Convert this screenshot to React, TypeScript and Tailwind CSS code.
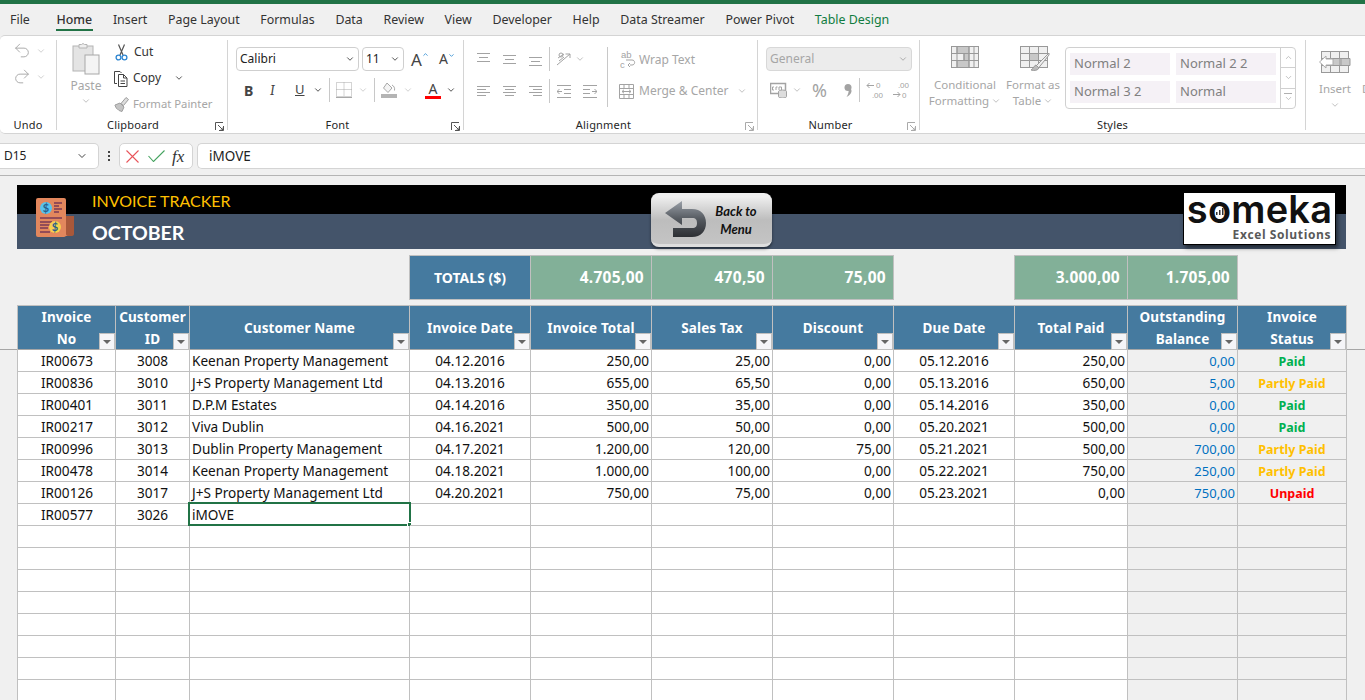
import { ChevronDown, ChevronUp, Redo2, Undo2 } from 'lucide-react';

const TABS = ['File', 'Home', 'Insert', 'Page Layout', 'Formulas', 'Data', 'Review', 'View', 'Developer', 'Help', 'Data Streamer', 'Power Pivot', 'Table Design'];

const COLS = 'grid grid-cols-[99px_74px_220px_121px_121px_121px_121px_121px_113px_110px_109px]';

const HEADERS = ['Invoice\nNo', 'Customer\nID', 'Customer Name', 'Invoice Date', 'Invoice Total', 'Sales Tax', 'Discount', 'Due Date', 'Total Paid', 'Outstanding\nBalance', 'Invoice\nStatus'];

const ROWS = [
  ['IR00673', '3008', 'Keenan Property Management', '04.12.2016', '250,00', '25,00', '0,00', '05.12.2016', '250,00', '0,00', 'Paid'],
  ['IR00836', '3010', 'J+S Property Management Ltd', '04.13.2016', '655,00', '65,50', '0,00', '05.13.2016', '650,00', '5,00', 'Partly Paid'],
  ['IR00401', '3011', 'D.P.M Estates', '04.14.2016', '350,00', '35,00', '0,00', '05.14.2016', '350,00', '0,00', 'Paid'],
  ['IR00217', '3012', 'Viva Dublin', '04.16.2021', '500,00', '50,00', '0,00', '05.20.2021', '500,00', '0,00', 'Paid'],
  ['IR00996', '3013', 'Dublin Property Management', '04.17.2021', '1.200,00', '120,00', '75,00', '05.21.2021', '500,00', '700,00', 'Partly Paid'],
  ['IR00478', '3014', 'Keenan Property Management', '04.18.2021', '1.000,00', '100,00', '0,00', '05.22.2021', '750,00', '250,00', 'Partly Paid'],
  ['IR00126', '3017', 'J+S Property Management Ltd', '04.20.2021', '750,00', '75,00', '0,00', '05.23.2021', '0,00', '750,00', 'Unpaid'],
  ['IR00577', '3026', 'iMOVE', '', '', '', '', '', '', '', ''],
  ...Array.from({ length: 8 }, () => ['', '', '', '', '', '', '', '', '', '', '']),
];

const STATUS: Record<string, string> = {
  Paid: 'text-[#00b050]',
  'Partly Paid': 'text-[#ffc000]',
  Unpaid: 'text-[#ff0000]',
};

function Chev({ className = '' }: { className?: string }) {
  return <ChevronDown className={`w-[10px] h-[10px] shrink-0 ${className}`} strokeWidth={2} />;
}

function Launcher({ dark = false }: { dark?: boolean }) {
  return (
    <svg width="9" height="9" viewBox="0 0 9 9" fill="none" stroke={dark ? '#555' : '#aaa'} strokeWidth="1">
      <path d="M.5 8V.5H8M8.5 4v4.5H4M3 3l5 5M8 5.500V8H5.500" />
    </svg>
  );
}

function Lines({ rows }: { rows: [number, number, number][] }) {
  return (
    <svg width="15" height="15" viewBox="0 0 15 15" stroke="#a3a3a3" strokeWidth="1" className="shrink-0">
      {rows.map(([a, b, y]) => (
        <line key={y} x1={a} x2={b} y1={y + 0.5} y2={y + 0.5} />
      ))}
    </svg>
  );
}

function Sep({ className = 'h-[24px]' }: { className?: string }) {
  return <div className={`w-px bg-[#c8c8c8] shrink-0 ${className}`} />;
}

function Group({ label, width, labelPad = '', launcher, dark, children }: { label: string; width: string; labelPad?: string; launcher?: boolean; dark?: boolean; children: React.ReactNode }) {
  return (
    <div className={`relative flex flex-col shrink-0 border-r border-[#d4d4d4] my-[4px] h-[90px] ${width}`}>
      <div className="flex-1 min-h-0">{children}</div>
      <div className={`h-[17px] translate-y-[3px] text-center text-[11px] leading-[17px] text-[#262626] tracking-[0.2px] ${labelPad}`}>{label}</div>
      {launcher && (
        <div className="absolute right-[3px] -bottom-[1px]">
          <Launcher dark={dark} />
        </div>
      )}
    </div>
  );
}

function ScissorsIcon() {
  return (
    <svg width="13" height="17" viewBox="0 0 13 17" fill="none">
      <path d="M3.500 .5L8 11M9.500 .5L5 11" stroke="#555" strokeWidth="1.200" />
      <circle cx="3.500" cy="13.500" r="2.400" stroke="#2e86d1" strokeWidth="1.300" />
      <circle cx="9.500" cy="13.500" r="2.400" stroke="#2e86d1" strokeWidth="1.300" />
    </svg>
  );
}

function CopyIcon() {
  return (
    <svg width="16" height="17" viewBox="0 0 16 17" fill="none" stroke="#444" strokeWidth="1">
      <path d="M4 13.500H1.500V1.500H7L8.500 3" />
      <path d="M5.500 4.500h5l3.500 3.500v8.500H5.500z" />
      <path d="M10.500 4.500V8H14M7.500 11h4.500M7.500 13.500h4.500" />
    </svg>
  );
}

function PasteIcon() {
  return (
    <svg width="28" height="32" viewBox="0 0 28 32">
      <rect x="1" y="3" width="20" height="25" fill="#e4e4e4" stroke="#b4b4b4" />
      <path d="M7 3V1.500h2.500L11 .5l1.500 1h2.500V5H7z" fill="#efefef" stroke="#b4b4b4" />
      <rect x="13" y="12" width="14" height="19" fill="#f4f4f4" stroke="#a8a8a8" />
    </svg>
  );
}

function BrushIcon() {
  return (
    <svg width="16" height="16" viewBox="0 0 16 16">
      <path d="M1 9l5-2 4 4-2 4.500-3-1-1.500-1.500-1-.5-1.500-3z" fill="#c4c4c4" stroke="#9e9e9e" />
      <path d="M7 7.500l5-6 2.500 2-5 6z" fill="#ddd" stroke="#9e9e9e" />
    </svg>
  );
}

function BorderIcon() {
  return (
    <svg width="16" height="16" viewBox="0 0 16 16" fill="none" stroke="#a8a8a8" strokeDasharray="1 1">
      <path d="M.5.5h15v14H.5zM8 .5v14M.5 7.500h15" />
      <path d="M0 15.500h16" strokeDasharray="none" />
    </svg>
  );
}

function FillIcon() {
  return (
    <svg width="16" height="16" viewBox="0 0 16 16">
      <path d="M6 1l5 5-4 4.500-4.500-4.500z" fill="#f4f4f4" stroke="#a8a8a8" />
      <path d="M11 3c2 1 3 3 2.500 5.500" fill="none" stroke="#a8a8a8" />
      <rect x="0" y="12" width="16" height="4" fill="#b4b4b4" />
    </svg>
  );
}

function OrientIcon() {
  return (
    <svg width="16" height="15" viewBox="0 0 16 15" fill="none" stroke="#a3a3a3">
      <path d="M1 13L14 2M9.500 2H14v4" />
      <circle cx="5" cy="3" r="2" />
      <path d="M2 6l6-4M3 9l5-4" />
    </svg>
  );
}

function IndentIcon({ flip = false }: { flip?: boolean }) {
  return (
    <svg width="14" height="13" viewBox="0 0 14 13" fill="none" stroke="#a3a3a3" className={flip ? '-scale-x-100' : ''}>
      <path d="M0 .5h14M0 12.500h14M7 4.500h7M7 8.500h7M5 6.500H0M2.500 4L0 6.500 2.500 9" />
    </svg>
  );
}

function MergeIcon() {
  return (
    <svg width="15" height="15" viewBox="0 0 15 15" fill="none" stroke="#a3a3a3">
      <path d="M.5.500h14v14H.5zM.5 4.500h14M.5 10.500h14M5 .500v4M10 .500v4M5 10.500v4M10 10.500v4" />
      <path d="M3 7.500h9M5 5.800L3 7.500l2 1.700M10 5.800l2 1.700-2 1.700" />
    </svg>
  );
}

function WrapIcon() {
  return (
    <svg width="16" height="20" viewBox="0 0 16 20" fill="none" stroke="#a3a3a3" fontFamily="Liberation Sans" className="overflow-visible">
      <text x="1" y="8.500" fontSize="9.500" fill="#a3a3a3" stroke="none">ab</text>
      <text x="0" y="19" fontSize="9.500" fill="#a3a3a3" stroke="none">c</text>
      <path d="M10 16h2c3.500 0 3.500-5 0-5H6M10 14l-2 2 2 2" />
    </svg>
  );
}

function AccountingIcon() {
  return (
    <svg width="17" height="16" viewBox="0 0 17 16" fill="none" stroke="#a3a3a3">
      <rect x=".5" y="1.500" width="15" height="10" strokeWidth="1.500" />
      <path d="M4 5H2.500v3H4M6 8V5h1.500M9 8V5h2.500v3" strokeWidth="1" />
      <ellipse cx="12.500" cy="9.500" rx="4" ry="1.500" fill="#ddd" />
      <path d="M8.500 9.500v5c0 2 8 2 8 0v-5" fill="#ddd" />
    </svg>
  );
}

function DecimalIcon({ more = false }: { more?: boolean }) {
  return (
    <svg width="17" height="20" viewBox="0 0 17 20" fill="none" stroke="#a3a3a3" fontFamily="Liberation Sans" className="overflow-visible">
      {more ? (
        <>
          <text x="17" y="8" textAnchor="end" fontSize="8" fill="#a3a3a3" stroke="none">.00</text>
          <path d="M1 14.500h7M5.500 12L8 14.500 5.500 17" />
          <text x="10" y="18" fontSize="8" fill="#a3a3a3" stroke="none">0</text>
        </>
      ) : (
        <>
          <path d="M1 5.500h7M3.500 3L1 5.500 3.500 8" />
          <text x="10" y="8" fontSize="8" fill="#a3a3a3" stroke="none">0</text>
          <text x="17" y="18" textAnchor="end" fontSize="8" fill="#a3a3a3" stroke="none">.00</text>
        </>
      )}
    </svg>
  );
}

function CommaIcon() {
  return (
    <svg width="8" height="13" viewBox="0 0 8 13" fill="#a3a3a3">
      <circle cx="4" cy="3.500" r="3.500" />
      <path d="M5 5c2.500-.5 2.500 1 2.500 2C7.500 9.500 5 12 2.500 13 4 10.500 5 8 4.500 6z" />
    </svg>
  );
}

function CondIcon() {
  return (
    <svg width="28" height="22" viewBox="0 0 28 22" stroke="#999" fill="#f0f0f0">
      <rect x=".5" y=".5" width="27" height="21" />
      <path d="M6 .500h12v7H6zM13 7.500h5v7h-5zM6 14.500h12v7H6z" fill="#c8c8c8" />
      <path d="M.5 7.500h27M.5 14.500h27M6 .500v21M13 7.500v7M18 .500v21M23 .500v21" fill="none" />
    </svg>
  );
}

function TableIcon() {
  return (
    <svg width="30" height="27" viewBox="0 0 30 27" stroke="#999" fill="#f0f0f0">
      <rect x=".5" y=".5" width="27" height="21" />
      <path d="M.5 7.500h27M.5 14.500h27M9.500 .500v21M18.500 .500v21" fill="none" />
      <path d="M9.500 7.500h9v7h-9z" fill="#c8c8c8" />
      <path d="M29 7L16 20l2.500 2L29 9z" fill="#eee" />
      <path d="M16 19c-2 .5-2 3-5 5 3 1 7 .5 8-2z" fill="#bbb" />
    </svg>
  );
}

function InsertIcon() {
  return (
    <svg width="32" height="22" viewBox="0 0 32 22" stroke="#999" fill="#f0f0f0">
      <rect x="2.500" y=".5" width="27" height="21" />
      <path d="M2.500 7.500h27M2.500 14.500h27M11.500 .500v21M20.500 .500v21" fill="none" />
      <path d="M13 7.500h8v7h-8zM22 7.500h9v7h-9z" fill="#c8c8c8" />
      <path d="M.5 11L7 5v3h7v6H7v3z" fill="#fff" stroke="#aaa" />
    </svg>
  );
}

function RibbonBig({ lines, children, className = '' }: { lines: React.ReactNode[]; children: React.ReactNode; className?: string }) {
  return (
    <div className={`flex flex-col items-center text-[#a6a6a6] text-[11.5px] leading-[16px] ${className}`}>
      <div className="h-[30px]">{children}</div>
      {lines.map((l, i) => (
        <div key={i} className="flex items-center gap-[2px] whitespace-nowrap">
          {l}
        </div>
      ))}
    </div>
  );
}

function Ribbon() {
  return (
    <div className="h-[99px] bg-white rounded-l-[5px] border-y border-[#d4d4d4] flex shrink-0 overflow-hidden">
      <Group label="Undo" width="w-[57px]">
        <div className="flex flex-col gap-[7px] pl-[12px] pt-[1px] text-[#a8a8a8]">
          <div className="flex items-center gap-[4px]">
            <Undo2 className="w-[20px] h-[19px]" strokeWidth={1.2} />
            <Chev className="text-[#c8c8c8]" />
          </div>
          <div className="flex items-center gap-[4px]">
            <Redo2 className="w-[20px] h-[19px]" strokeWidth={1.2} />
            <Chev className="text-[#c8c8c8]" />
          </div>
        </div>
      </Group>

      <Group label="Clipboard" width="w-[171px]" labelPad="pr-[18px]" launcher dark>
        <div className="flex pl-[14px] pt-[3px]">
          <div className="flex flex-col items-center w-[30px] text-[#a6a6a6] text-[12px]">
            <PasteIcon />
            <div className="mt-[3px] leading-[16px]">Paste</div>
            <Chev className="text-[#b4b4b4] mt-[2px]" />
          </div>
          <div className="ml-[14px] text-[12px] text-[#333] flex flex-col gap-[8px]">
            <div className="flex items-center h-[18px] gap-[6px]">
              <ScissorsIcon />
              <span>Cut</span>
            </div>
            <div className="flex items-center h-[18px] gap-[4px] -ml-[2px]">
              <CopyIcon />
              <span>Copy</span>
              <Chev className="ml-[9px] text-[#333]" />
            </div>
            <div className="flex items-center h-[18px] gap-[3px] -ml-[1px] text-[#a6a6a6]">
              <BrushIcon />
              <span className="text-[11.3px]">Format Painter</span>
            </div>
          </div>
        </div>
      </Group>

      <Group label="Font" width="w-[236px]" labelPad="pr-[16px]" launcher dark>
        <div className="pl-[8px] pt-[7px]">
          <div className="flex items-center">
            <div className="w-[123px] h-[24px] border border-[#cfcfcf] rounded-[4px] flex items-center justify-between px-[3px] text-[12px] text-[#222]">
              Calibri
              <Chev className="text-[#333]" />
            </div>
            <div className="w-[42px] h-[24px] ml-[3px] border border-[#cfcfcf] rounded-[4px] flex items-center justify-between px-[3px] text-[12px] text-[#222]">
              11
              <Chev className="text-[#333]" />
            </div>
            <div className="ml-[7px] text-[17px] leading-none text-[#444] flex items-start">
              A<ChevronUp className="w-[7px] h-[7px] text-[#3b93d6]" strokeWidth={3} />
            </div>
            <div className="ml-[10px] text-[14px] leading-none text-[#444] flex items-start">
              A<ChevronDown className="w-[7px] h-[7px] text-[#3b93d6]" strokeWidth={3} />
            </div>
          </div>
          <div className="flex items-center h-[24px] mt-[7px] text-[#444]">
            <span className="ml-[8px] w-[26px] text-[14px] font-bold">B</span>
            <span className="w-[25px] text-[14px] italic font-serif">I</span>
            <span className="w-[18px] text-[13px] underline">U</span>
            <Chev className="text-[#333]" />
            <Sep className="h-[24px] ml-[6px]" />
            <span className="ml-[6px]"><BorderIcon /></span>
            <Chev className="ml-[6px] text-[#c8c8c8]" />
            <Sep className="h-[24px] ml-[6px]" />
            <span className="ml-[6px]"><FillIcon /></span>
            <Chev className="ml-[6px] text-[#c8c8c8]" />
            <span className="ml-[12px] w-[16px] text-center text-[14px] leading-[15px] border-b-[3px] border-[#ff0000]">A</span>
            <Chev className="ml-[5px] text-[#333]" />
          </div>
        </div>
      </Group>

      <Group label="Alignment" width="w-[294px]" labelPad="pr-[14px]" launcher>
        <div className="pl-[12px] pt-[7px]">
          <div className="flex items-center h-[24px]">
            <div className="flex gap-[11px]">
              <Lines rows={[[1, 14, 1], [3, 12, 5], [1, 14, 9]]} />
              <Lines rows={[[1, 14, 3], [3, 12, 7], [1, 14, 11]]} />
              <Lines rows={[[1, 14, 5], [3, 12, 9], [1, 14, 13]]} />
            </div>
            <Sep className="h-[24px] ml-[6px]" />
            <span className="ml-[6px]"><OrientIcon /></span>
            <Chev className="ml-[3px] text-[#b4b4b4]" />
            <Sep className="h-[60px] ml-[22px] self-start" />
            <span className="ml-[12px]"><WrapIcon /></span>
            <span className="ml-[3px] mt-[2px] text-[12px] text-[#a6a6a6]">Wrap Text</span>
          </div>
          <div className="flex items-center h-[24px] mt-[8px]">
            <div className="flex gap-[11px]">
              <Lines rows={[[1, 14, 2], [1, 10, 5], [1, 14, 8], [1, 10, 11]]} />
              <Lines rows={[[1, 14, 2], [3, 12, 5], [1, 14, 8], [3, 12, 11]]} />
              <Lines rows={[[1, 14, 2], [5, 14, 5], [1, 14, 8], [5, 14, 11]]} />
            </div>
            <Sep className="h-[24px] ml-[6px]" />
            <span className="ml-[7px]"><IndentIcon /></span>
            <span className="ml-[12px]"><IndentIcon flip /></span>
            <span className="ml-[22px]"><MergeIcon /></span>
            <span className="ml-[5px] text-[12px] text-[#a6a6a6] whitespace-nowrap">Merge &amp; Center</span>
            <Chev className="ml-[8px] text-[#b4b4b4]" />
          </div>
        </div>
      </Group>

      <Group label="Number" width="w-[162px]" labelPad="pr-[16px]" launcher>
        <div className="pl-[8px] pt-[7px]">
          <div className="w-[146px] h-[24px] bg-[#ececec] border border-[#d8d8d8] rounded-[4px] flex items-center justify-between px-[3px] text-[12px] text-[#a6a6a6]">
            General
            <Chev className="text-[#a0a0a0]" />
          </div>
          <div className="flex items-center h-[24px] mt-[7px] text-[#a3a3a3]">
            <span className="ml-[4px]"><AccountingIcon /></span>
            <Chev className="ml-[5px] text-[#b4b4b4]" />
            <span className="ml-[10px] w-[18px] text-[18px] leading-none">%</span>
            <span className="ml-[14px] w-[12px]"><CommaIcon /></span>
            <Sep className="h-[24px] ml-[3px]" />
            <span className="ml-[6px]"><DecimalIcon /></span>
            <span className="ml-[9px]"><DecimalIcon more /></span>
          </div>
        </div>
      </Group>

      <Group label="Styles" width="w-[386px]">
        <div className="flex pt-[7px]">
          <RibbonBig className="w-[90px]" lines={['Conditional', <>Formatting<Chev className="text-[#b4b4b4] w-[8px]" /></>]}>
            <div className="-mt-[1px]"><CondIcon /></div>
          </RibbonBig>
          <RibbonBig className="w-[56px] -ml-[5px]" lines={['Format as', <>Table<Chev className="text-[#b4b4b4] w-[8px]" /></>]}>
            <div className="-mt-[1px] ml-[3px]"><TableIcon /></div>
          </RibbonBig>
          <div className="ml-[4px] w-[231px] h-[62px] border border-[#d0d0d0] rounded-[4px] flex text-[13px] text-[#808080]">
            <div className="grid grid-cols-[100px_100px] gap-[6px] pl-[4px] pt-[5px] w-[214px] content-start">
              {['Normal 2', 'Normal 2 2', 'Normal 3 2', 'Normal'].map(s => (
                <div key={s} className="h-[22px] bg-[#f5f1f6] leading-[21px] pl-[4px]">{s}</div>
              ))}
            </div>
            <div className="w-[15px] ml-auto border-l border-[#d0d0d0] flex flex-col text-[#b0b0b0]">
              <div className="flex-1 flex items-center justify-center border-b border-[#d0d0d0]"><ChevronUp className="w-[9px] h-[9px]" /></div>
              <div className="flex-1 flex items-center justify-center border-b border-[#d0d0d0]"><ChevronDown className="w-[9px] h-[9px]" /></div>
              <div className="flex-1 flex flex-col items-center justify-center">
                <div className="w-[8px] h-px bg-[#b0b0b0]" />
                <ChevronDown className="w-[9px] h-[9px]" />
              </div>
            </div>
          </div>
        </div>
      </Group>

      <div className="flex-1 pl-[13px] pt-[11px] my-[4px] flex gap-[11px] overflow-hidden">
        <RibbonBig className="w-[32px]" lines={['Insert', <Chev className="text-[#b4b4b4] mt-[3px]" />]}>
          <InsertIcon />
        </RibbonBig>
        <div className="text-[11.5px] text-[#a6a6a6] mt-[30px] leading-[16px]">D</div>
      </div>
    </div>
  );
}

function FormulaBar() {
  return (
    <div className="flex h-[26px] mt-[9px] shrink-0 text-[12px]">
      <div className="w-[99px] bg-white border-y border-r border-[#d4d4d4] rounded-r-[5px] flex items-center justify-between pl-[4px] pr-[10px] text-[#222]">
        D15
        <ChevronDown className="w-[12px] h-[12px] text-[#444]" />
      </div>
      <div className="w-[20px] flex flex-col items-center justify-center gap-[2px]">
        <div className="w-[2px] h-[2px] bg-[#444]" />
        <div className="w-[2px] h-[2px] bg-[#444]" />
        <div className="w-[2px] h-[2px] bg-[#444]" />
      </div>
      <div className="w-[74px] bg-white border border-[#d4d4d4] rounded-[5px] flex items-center pl-[6px]">
        <svg width="13" height="13" viewBox="0 0 13 13" fill="none" stroke="#e8545a" strokeWidth="1.100">
          <path d="M.5.5l12 12M12.500.5l-12 12" />
        </svg>
        <svg width="17" height="12" viewBox="0 0 17 12" fill="none" stroke="#45a35f" strokeWidth="1.100" className="ml-[9px]">
          <path d="M.5 6l5 5.500L16.500.5" />
        </svg>
        <span className="ml-[7px] text-[17px] leading-none italic font-['Liberation_Serif',serif] text-[#333]">fx</span>
      </div>
      <div className="flex-1 ml-[4px] bg-white border-y border-l border-[#d4d4d4] rounded-l-[5px] flex items-center pl-[11px] text-[13.5px] text-[#222]">
        iMOVE
      </div>
    </div>
  );
}

function InvoiceIcon() {
  return (
    <svg width="40" height="40" viewBox="0 0 40 40">
      <path d="M28 18h10v18c0 1-1 2-2 2h-8z" fill="#a9583a" />
      <rect x="0" y="0" width="30" height="39" rx="2" fill="#e2875d" />
      <path d="M30 33v3c0 1.500 1 2 3 2H6z" fill="#e2875d" />
      <circle cx="10" cy="10" r="6" fill="#55c3ee" />
      <text x="10" y="14" textAnchor="middle" fontSize="11" fontWeight="700" fill="#2b5f8a">$</text>
      <path d="M18 5h8M18 8h5M18 11h8M18 14h5M4 20h22M4 24h12M4 27h10M4 30h8M4 34h10" stroke="#7a3a55" strokeWidth="1.300" />
      <circle cx="19" cy="29" r="6" fill="#f6d04d" />
      <text x="19" y="33" textAnchor="middle" fontSize="11" fontWeight="700" fill="#2b5f8a">$</text>
    </svg>
  );
}

function BackButton() {
  return (
    <div className="absolute left-[634px] top-[8px] w-[121px] h-[54px] rounded-[8px] bg-gradient-to-b from-[#f0f0f0] via-[#bdbdbd] to-[#c4c4c4] border-t-[3px] border-t-[#eeeeee] border-b-[3px] border-b-[#dddddd] shadow-[0_2px_3px_rgba(0,0,0,0.45)] flex items-center">
      <svg width="42" height="44" viewBox="0 0 42 44" className="ml-[13px] shrink-0">
        <defs>
          <linearGradient id="arrow" x1="0" y1="0" x2="0" y2="1">
            <stop offset="0" stopColor="#9aa0a8" />
            <stop offset="0.5" stopColor="#555a60" />
            <stop offset="1" stopColor="#2d2f33" />
          </linearGradient>
        </defs>
        <path d="M18 3L1 15l17 12v-7h10c4 0 5 2 5 5s-1 5-5 5H9v9h19c9 0 14-6 14-14S37 11 28 11H18z" fill="url(#arrow)" />
      </svg>
      <div className="ml-[5px] w-[50px] text-center font-['Lato',sans-serif] italic font-bold text-[13px] leading-[18px] text-[#111]">
        Back to
        <br />
        Menu
      </div>
    </div>
  );
}

function Logo() {
  return (
    <div className="absolute right-[10px] top-[7px] w-[153px] h-[53px] bg-white border border-black shadow-[2px_3px_4px_rgba(0,0,0,0.5)] flex flex-col items-center">
      <div className="relative font-['Inter',sans-serif] font-semibold text-[38px] leading-[33px] tracking-[0.2px] text-[#111] h-[34px]">
        someka
        <svg width="8" height="7" viewBox="0 0 8 7" className="absolute left-[29px] top-[15px]" fill="#333">
          <rect x="0" y="4" width="1.500" height="3" />
          <rect x="3" y="2" width="1.500" height="5" />
          <rect x="6" y="0" width="1.500" height="7" />
        </svg>
      </div>
      <div className="self-end pr-[4px] font-['Open_Sans',sans-serif] font-bold text-[12px] leading-[15px] tracking-[0.6px] text-[#595959]">Excel Solutions</div>
    </div>
  );
}

function Banner() {
  return (
    <div className="relative ml-[17px] w-[1329px] h-[64px] flex flex-col font-['Lato',sans-serif] shrink-0">
      <div className="h-[29px] bg-black pl-[75px] text-[#ffc000] text-[16px] leading-[31px]">INVOICE TRACKER</div>
      <div className="h-[35px] bg-[#44546a] pl-[75px] text-white text-[19.5px] leading-[37px] font-bold">OCTOBER</div>
      <div className="absolute left-[19px] top-[13px]">
        <InvoiceIcon />
      </div>
      <BackButton />
      <Logo />
    </div>
  );
}

function Totals() {
  const green = 'h-full bg-[#82b098] border-y border-r border-[#c0c0c0] flex items-center justify-end pr-[7px] text-white text-[15.5px] font-bold tracking-[0.3px]';
  return (
    <div className="ml-[409px] mt-[6px] h-[45px] flex shrink-0">
      <div className="w-[122px] h-full bg-[#457a9f] border border-[#c0c0c0] flex items-center justify-center text-white text-[14px] font-bold">TOTALS ($)</div>
      <div className={`w-[121px] ${green}`}>4.705,00</div>
      <div className={`w-[121px] ${green}`}>470,50</div>
      <div className={`w-[121px] ${green}`}>75,00</div>
      <div className="w-[120px]" />
      <div className={`w-[114px] border-l ${green}`}>3.000,00</div>
      <div className={`w-[110px] ${green}`}>1.705,00</div>
    </div>
  );
}

function FilterBtn() {
  return (
    <div className="absolute right-0 bottom-0 w-[16px] h-[17px] bg-[#f5f5f8] border border-[#bfbfbf] flex items-center justify-center">
      <div className="w-0 h-0 border-x-[4px] border-x-transparent border-t-[4px] border-t-[#666]" />
    </div>
  );
}

function Sheet() {
  return (
    <div className="flex-1 min-h-0 overflow-hidden">
      <div className="border-b border-[#a6a6a6] mt-[5px] pl-[17px]">
        <div className={`${COLS} w-[1330px] h-[44px] bg-[#457a9f] border-t border-[#c0c0c0] text-white text-[13.5px] font-bold leading-[22px] tracking-[0.1px]`}>
          {HEADERS.map((h, i) => (
            <div key={h} className={`relative border-r border-[#c0c0c0] flex items-center justify-center text-center whitespace-pre-line ${i === 0 ? 'border-l' : ''}`}>
              <span>{h}</span>
              <FilterBtn />
            </div>
          ))}
        </div>
      </div>
      <div className="pl-[17px] text-[13.6px] text-[#111]">
        {ROWS.map((row, r) => (
          <div key={r} className={`${COLS} w-[1330px] h-[22px] bg-white`}>
            {row.map((v, c) => {
              const base = 'relative h-[22px] border-b border-r border-[#c0c0c0] leading-[21px] whitespace-nowrap';
              if (c === 0) return <div key={c} className={`${base} border-l text-center pl-[1px]`}>{v}</div>;
              if (c === 1) return <div key={c} className={`${base} text-center`}>{v}</div>;
              if (c === 2)
                return (
                  <div key={c} className={`${base} pl-[2px]`}>
                    {v}
                    {r === 7 && (
                      <div className="absolute -left-[2px] -top-[2px] -right-[2px] -bottom-[1px] border-2 border-[#217346]">
                        <div className="absolute -right-[3px] -bottom-[3px] w-[5px] h-[5px] bg-[#217346] border border-white" />
                      </div>
                    )}
                  </div>
                );
              if (c === 3 || c === 7) return <div key={c} className={`${base} text-center`}>{v}</div>;
              if (c === 9) return <div key={c} className={`${base} !leading-[22px] bg-[#f0f0f0] text-right pr-[2px] text-[13px] text-[#0070c0]`}>{v}</div>;
              if (c === 10) return <div key={c} className={`${base} !leading-[22px] pt-[1px] bg-[#f0f0f0] text-center text-[12.5px] font-bold ${STATUS[v] ?? ''}`}>{v}</div>;
              return <div key={c} className={`${base} text-right pr-[2px]`}>{v}</div>;
            })}
          </div>
        ))}
      </div>
    </div>
  );
}

export default function App() {
  return (
    <div className="w-[1365px] h-[700px] overflow-hidden bg-[#f0f0f0] flex flex-col font-['Noto_Sans',sans-serif]">
      <div className="h-[4px] bg-[#217346] shrink-0" />
      <div className="h-[31px] flex items-center pt-[2px] pl-[10px] gap-[20.7px] text-[12.4px] text-[#333] shrink-0">
        {TABS.map(t => (
          <div key={t} className={`relative whitespace-nowrap ${t === 'Home' ? 'font-medium ml-[6px]' : ''} ${t === 'Table Design' ? 'text-[#107c41]' : ''}`}>
            {t}
            {t === 'Home' && <div className="absolute -left-[1px] -right-[1px] top-[18px] h-[2px] bg-[#217346]" />}
          </div>
        ))}
      </div>
      <Ribbon />
      <FormulaBar />
      <div className="h-[7px] border-b border-[#b4b4b4] shrink-0" />
      <div className="h-[9px] shrink-0" />
      <Banner />
      <Totals />
      <Sheet />
    </div>
  );
}
